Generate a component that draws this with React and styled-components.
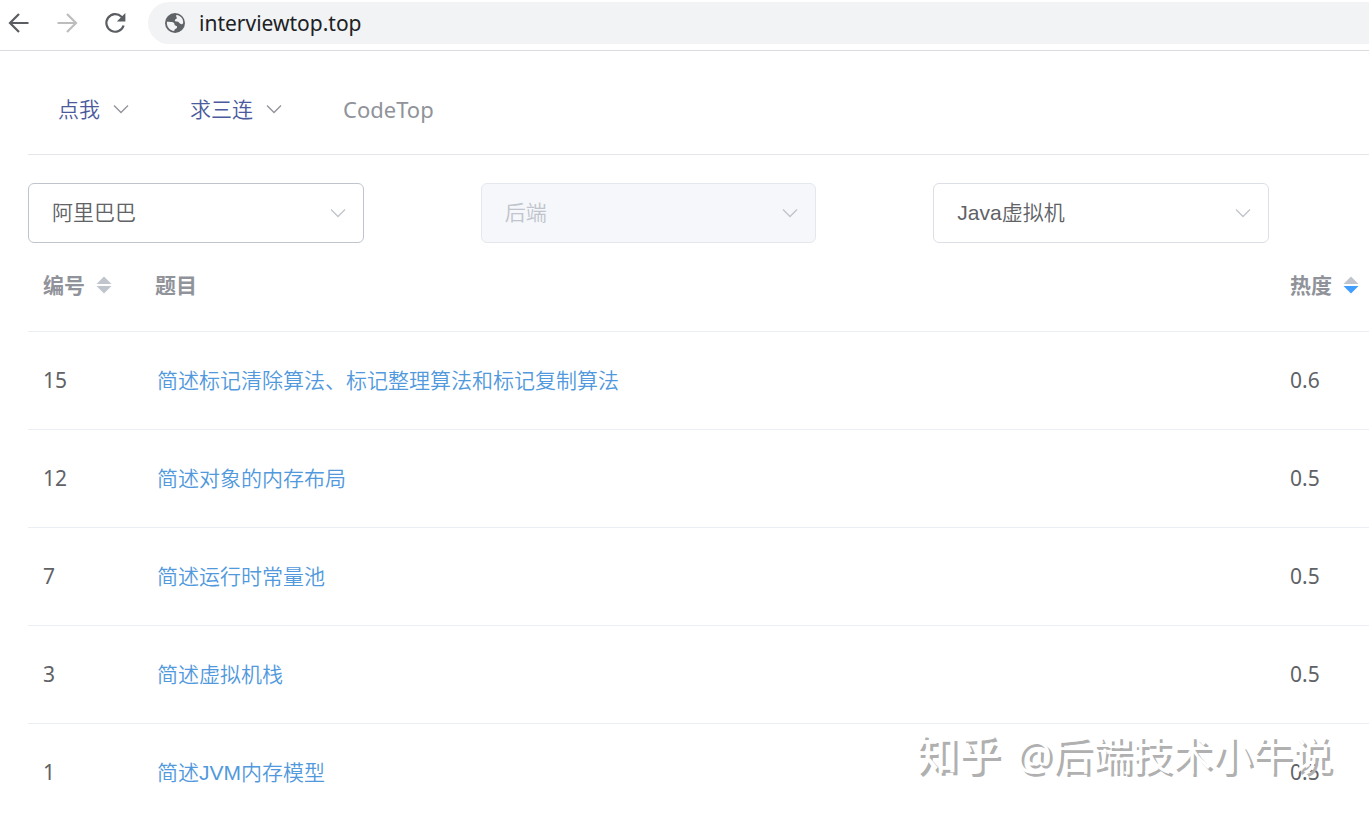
import React from "react";
import styled, { createGlobalStyle } from "styled-components";

const GlobalStyle = createGlobalStyle`
  *, *::before, *::after { box-sizing: border-box; }
  body {
    margin: 0;
    background: #fff;
    color: #606266;
    font-family: "Noto Sans", "Noto Sans CJK SC", sans-serif;
    font-size: 21px;
    line-height: 28px;
  }
  button, select, input { font: inherit; color: inherit; }
  button { padding: 0; border: 0; background: none; cursor: pointer; }
`;

const Window = styled.div`
  height: 100vh;
  display: flex;
  flex-direction: column;
  overflow: hidden;
`;

const BrowserBar = styled.header`
  flex: none;
  display: flex;
  align-items: center;
  height: 51px;
  padding: 0 0 5px 7px;
  border-bottom: 1px solid #dadce0;
`;

const NavButton = styled.button`
  display: flex;
  width: 24px;
  height: 24px;
  margin-right: 24px;
  color: ${(p) => (p.disabled ? "#bdbdbd" : "#5a5d61")};
`;

const AddressBar = styled.label`
  flex: 1;
  display: flex;
  align-items: center;
  gap: 13px;
  height: 42px;
  margin-left: -3px;
  padding-left: 16px;
  border-radius: 21px 0 0 21px;
  background: #f1f3f4;
  color: #5f6368;
`;

const AddressInput = styled.input`
  flex: 1;
  height: 28px;
  padding: 0;
  border: 0;
  outline: 0;
  background: none;
  color: #202124;
`;

const Page = styled.main`
  flex: 1;
  min-height: 0;
  overflow: hidden;
  padding-left: 28px;
`;

const Menu = styled.nav`
  display: flex;
  align-items: center;
  gap: 60px;
  height: 104px;
  padding: 12px 30px 0;
  border-bottom: 1px solid #e4e6ea;
`;

const MenuButton = styled.button`
  display: flex;
  align-items: center;
  gap: 12px;
  color: #4a5a9c;
  font-weight: 350;
`;

const MenuLink = styled.a`
  color: #909399;
  font-size: 22px;
  text-decoration: none;
`;

const Chevron = styled.svg`
  width: 18px;
  height: 18px;
  fill: none;
  stroke: ${(p) => p.$tone};
  stroke-width: 1.3;
`;

const Filters = styled.form`
  display: grid;
  grid-template-columns: repeat(3, 1fr);
  gap: 117px;
  padding: 28px 100px 0 0;
`;

const Field = styled.div`
  position: relative;
`;

const Select = styled.select`
  display: block;
  width: 100%;
  height: 60px;
  padding: 0 48px 0 23px;
  appearance: none;
  border: 1px solid ${(p) => (p.$active ? "#c0c4cc" : "#dcdfe6")};
  border-radius: 6px;
  outline: 0;
  background: #fff;
  font-family: "Liberation Sans", "Noto Sans CJK SC", sans-serif;
  font-weight: 350;
  opacity: 1;

  &:disabled {
    border-color: #e4e7ed;
    background: #f5f7fa;
    color: #c0c4cc;
  }
`;

const FieldArrow = styled.span`
  position: absolute;
  top: 0;
  right: 17px;
  height: 100%;
  display: flex;
  align-items: center;
  pointer-events: none;
`;

const Table = styled.table`
  width: 100%;
  border-collapse: collapse;
  table-layout: fixed;
`;

const HeadCell = styled.th`
  width: ${(p) => p.$width || "auto"};
  height: 88px;
  padding: 0 0 4px 15px;
  border-bottom: 1px solid #ebeef5;
  color: #909399;
  text-align: left;
  font-weight: 700;
`;

const SortButton = styled.button`
  display: flex;
  align-items: center;
  gap: 11px;
  font-weight: 700;
`;

const Cell = styled.td`
  height: 98px;
  padding: 0 0 0 15px;
  border-bottom: 1px solid #ebeef5;
`;

const TopicLink = styled.a`
  padding-left: 2px;
  color: #5199dc;
  font-family: "Liberation Sans", "Noto Sans CJK SC", sans-serif;
  font-weight: 350;
  text-decoration: none;
`;

const Watermark = styled.div`
  position: absolute;
  right: 37px;
  bottom: 28px;
  display: flex;
  align-items: baseline;
  gap: 16px;
  color: #fff;
  font-size: 40px;
  line-height: 60px;
  text-shadow: 3px 3px 0 #b0b0b0;
  white-space: nowrap;
  pointer-events: none;
`;

const WatermarkBrand = styled.span`
  font-size: 42px;
  font-weight: 500;
`;

const Arrow = ({ tone = "#c0c4cc" }) => (
  <Chevron viewBox="0 0 18 18" $tone={tone} aria-hidden="true">
    <path d="M2 5.5 9 12.5 16 5.5" />
  </Chevron>
);

const Sort = ({ down = "#c0c4cc" }) => (
  <svg width="16" height="18" viewBox="0 0 16 18" aria-hidden="true">
    <path d="M8 0.5 15.5 8H.5Z" fill="#c0c4cc" />
    <path d="M8 17.5 15.5 10H.5Z" fill={down} />
  </svg>
);

const navIcon = { viewBox: "0 0 24 24", width: 24, height: 24, "aria-hidden": true };

const rows = [
  [15, "简述标记清除算法、标记整理算法和标记复制算法", "0.6"],
  [12, "简述对象的内存布局", "0.5"],
  [7, "简述运行时常量池", "0.5"],
  [3, "简述虚拟机栈", "0.5"],
  [1, "简述JVM内存模型", "0.5"],
];

const filters = [
  { label: "公司", value: "阿里巴巴", active: true },
  { label: "岗位", value: "后端", disabled: true },
  { label: "分类", value: "Java虚拟机" },
];

export default function App() {
  return (
    <Window>
      <GlobalStyle />
      <BrowserBar>
        <NavButton aria-label="后退">
          <svg {...navIcon} fill="none" stroke="currentColor" strokeWidth="2.2">
            <path d="M21.5 12H3.5M12 3 3 12l9 9" />
          </svg>
        </NavButton>
        <NavButton aria-label="前进" disabled>
          <svg {...navIcon} fill="none" stroke="currentColor" strokeWidth="2.2">
            <path d="M2.5 12h18M12 3l9 9-9 9" />
          </svg>
        </NavButton>
        <NavButton aria-label="刷新">
          <svg {...navIcon} fill="none" stroke="currentColor" strokeWidth="2.2">
            <path d="M20.6 14.5A8.8 8.8 0 1 1 18.5 5.8L20.5 8" />
            <path d="M22.4 2v8.6H13.8Z" fill="currentColor" stroke="none" />
          </svg>
        </NavButton>
        <AddressBar>
          <svg width="22" height="22" viewBox="0 0 22 22" aria-hidden="true">
            <circle cx="11" cy="11" r="10" fill="currentColor" />
            <path
              d="M12.5 3C17 3.5 19.5 7 19.2 11c-.7 1.4-2 1.5-3 .8-1-.8-1.5-2-3-2.2-1.6 0-2.6-.3-2.4-1.5.2-1 1.7-.7 2-1.8.2-1-.9-1.4-.6-3.3Z"
              fill="#f1f3f4"
            />
            <path
              d="M2.9 9.8c2.3.2 5.2-.2 6.8 1 1.2 1 .4 2.3 1.6 2.8 1.6.5 2.3 1 1.5 2.3-.7 1-2.3.5-2.6 3.2C5.7 18.7 2.4 14.7 2.9 9.8Z"
              fill="#f1f3f4"
            />
          </svg>
          <AddressInput aria-label="地址" defaultValue="interviewtop.top" />
        </AddressBar>
      </BrowserBar>

      <Page>
        <Menu>
          <MenuButton>
            点我
            <Arrow tone="#909399" />
          </MenuButton>
          <MenuButton>
            求三连
            <Arrow tone="#909399" />
          </MenuButton>
          <MenuLink href="#codetop">CodeTop</MenuLink>
        </Menu>

        <Filters>
          {filters.map((f) => (
            <Field key={f.label}>
              <Select aria-label={f.label} $active={f.active} disabled={f.disabled}>
                <option>{f.value}</option>
              </Select>
              <FieldArrow>
                <Arrow />
              </FieldArrow>
            </Field>
          ))}
        </Filters>

        <Table>
          <thead>
            <tr>
              <HeadCell $width="112px">
                <SortButton>
                  编号
                  <Sort />
                </SortButton>
              </HeadCell>
              <HeadCell>题目</HeadCell>
              <HeadCell $width="94px">
                <SortButton>
                  热度
                  <Sort down="#409eff" />
                </SortButton>
              </HeadCell>
            </tr>
          </thead>
          <tbody>
            {rows.map(([id, title, heat]) => (
              <tr key={id}>
                <Cell>{id}</Cell>
                <Cell>
                  <TopicLink href={`#topic-${id}`}>{title}</TopicLink>
                </Cell>
                <Cell>{heat}</Cell>
              </tr>
            ))}
          </tbody>
        </Table>
      </Page>

      <Watermark>
        <WatermarkBrand>知乎</WatermarkBrand>
        <span>@后端技术小牛说</span>
      </Watermark>
    </Window>
  );
}
